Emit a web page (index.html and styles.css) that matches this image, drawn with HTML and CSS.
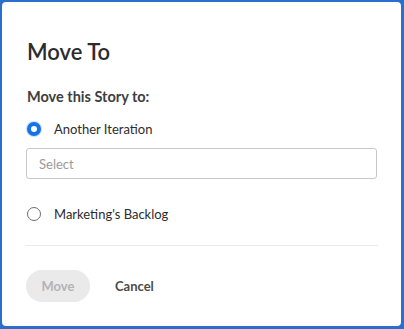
FILE: index.html
```html
<!DOCTYPE html>
<html lang="en">
<head>
    <meta charset="UTF-8">
    <meta name="viewport" content="width=device-width, initial-scale=1.0">
    <title>Move To</title>
    <link rel="stylesheet" href="styles.css">
</head>
<body>
    <div class="dialog">
        <h1>Move To</h1>
        <div class="group-label">Move this Story to:</div>

        <label class="option">
            <span class="radio checked"></span>
            Another Iteration
        </label>
        <div class="select">Select</div>

        <label class="option second">
            <span class="radio"></span>
            Marketing's Backlog
        </label>

        <hr class="divider">

        <div class="actions">
            <button class="btn-move" disabled>Move</button>
            <button class="btn-cancel">Cancel</button>
        </div>
    </div>
</body>
</html>
```

FILE: styles.css
```css
html, body {
    margin: 0;
    height: 100%;
}
body {
    background-color: #2b6fcc;
    font-family: Lato, "Open Sans", sans-serif;
    color: #2c2c2c;
    padding: 2px 3px 3px 2px;
    box-sizing: border-box;
}
.dialog {
    background: white;
    height: 100%;
    border-radius: 4px;
    padding: 35px 24px 0 24px;
    box-sizing: border-box;
}
h1 {
    margin: 0 0 21px 1px;
    font-size: 22px;
    font-weight: 600;
    line-height: 30px;
    color: #2c2c2c;
}
.group-label {
    margin-left: 1px;
    font-size: 14.5px;
    font-weight: 700;
    color: #3e3e3e;
    line-height: 18px;
}
.option {
    display: flex;
    align-items: center;
    gap: 13px;
    margin: 12px 0 0 1px;
    font-size: 13px;
    color: #2c2c2c;
    height: 22px;
}
.option.second {
    margin-top: 24px;
}
.radio {
    width: 14px;
    height: 14px;
    border: 1px solid #6e6e6e;
    border-radius: 50%;
    box-sizing: border-box;
    flex: none;
}
.radio.checked {
    border: 4px solid #1473e6;
    background: white;
    box-shadow: 0 0 0 1px #c8dcf7;
}
.select {
    margin-top: 8px;
    height: 31px;
    border: 1px solid #c8c8c8;
    border-radius: 3px;
    box-sizing: border-box;
    padding: 0 12px;
    display: flex;
    align-items: center;
    font-size: 13px;
    color: #9a9a9a;
}
.divider {
    border: none;
    border-top: 1px solid #ebebeb;
    margin: 20px -1px 0 -1px;
}
.actions {
    display: flex;
    align-items: center;
    gap: 25px;
    margin-top: 24px;
}
.actions button {
    font-family: inherit;
    font-size: 13px;
    font-weight: 700;
    border: none;
    background: none;
    cursor: pointer;
}
.btn-move {
    background: #eaeaea !important;
    color: #b3b3b3;
    border-radius: 16px;
    height: 32px;
    width: 64px;
}
.btn-cancel {
    color: #4b4b4b;
    padding: 0;
}
```
